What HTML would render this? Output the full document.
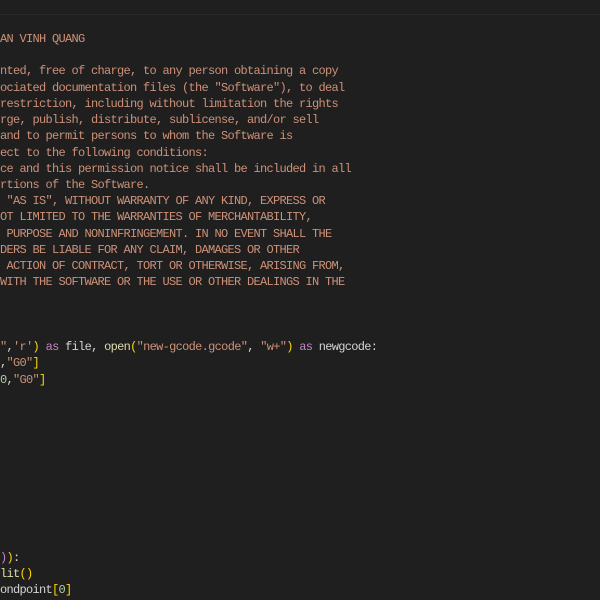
<!DOCTYPE html>
<html><head><meta charset="utf-8"><style>
html,body{margin:0;padding:0;background:#1f1f1f;width:600px;height:600px;overflow:hidden}
.bar{position:absolute;left:0;top:14px;width:600px;height:1px;background:#2b2b2b}
pre{position:absolute;left:0;top:31px;margin:0;font-family:"Liberation Mono",monospace;font-size:12px;letter-spacing:-0.7px;line-height:16.22px;color:#ce9178;white-space:pre}
.w{color:#d4d4d4}.k{color:#c586c0}.y{color:#ffd700}.f{color:#dcdcaa}.n{color:#b5cea8}.v{color:#9cdcfe}
</style></head><body>
<div class="bar"></div>
<pre>AN VINH QUANG

nted, free of charge, to any person obtaining a copy
ociated documentation files (the "Software"), to deal
restriction, including without limitation the rights
rge, publish, distribute, sublicense, and/or sell
and to permit persons to whom the Software is
ect to the following conditions:
ce and this permission notice shall be included in all
rtions of the Software.
 "AS IS", WITHOUT WARRANTY OF ANY KIND, EXPRESS OR
OT LIMITED TO THE WARRANTIES OF MERCHANTABILITY,
 PURPOSE AND NONINFRINGEMENT. IN NO EVENT SHALL THE
DERS BE LIABLE FOR ANY CLAIM, DAMAGES OR OTHER
 ACTION OF CONTRACT, TORT OR OTHERWISE, ARISING FROM,
WITH THE SOFTWARE OR THE USE OR OTHER DEALINGS IN THE



"<span class="w">,</span>'r'<span class="y">)</span> <span class="k">as</span> <span class="w">file,</span> <span class="f">open</span><span class="y">(</span>"new-gcode.gcode"<span class="w">,</span> "w+"<span class="y">)</span> <span class="k">as</span> <span class="w">newgcode:</span>
<span class="w">,</span>"G0"<span class="y">]</span>
<span class="n">0</span><span class="w">,</span>"G0"<span class="y">]</span>










<span class="k">)</span><span class="y">)</span><span class="w">:</span>
<span class="f">lit</span><span class="y">()</span>
<span class="w">ondpoint</span><span class="y">[</span><span class="n">0</span><span class="y">]</span></pre>
</body></html>
